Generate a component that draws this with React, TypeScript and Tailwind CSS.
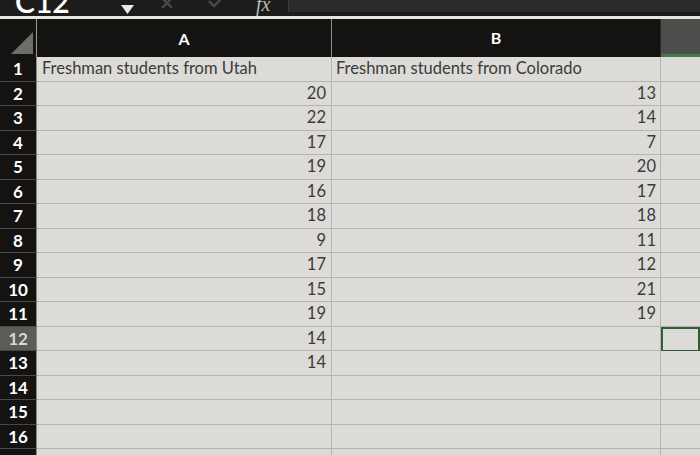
const colA = [null, 20, 22, 17, 19, 16, 18, 9, 17, 15, 19, 14, 14, null, null, null, null];
const colB = [null, 13, 14, 7, 20, 17, 18, 11, 12, 21, 19, null, null, null, null, null, null];

const App = () => {
    const rows = Array.from({ length: 17 }, (_, i) => i + 1);
    return (
        <div className="w-[700px] h-[455px] overflow-hidden bg-[#dcdbd7] text-[#3b3b3b]" style={{ fontFamily: 'Lato, "Open Sans", sans-serif' }}>
            {/* name box / formula bar */}
            <div className="flex h-[16px] bg-[#1d1c1b] overflow-hidden">
                <div className="w-[112px] pl-[15px] text-white font-semibold text-[30px] leading-none -mt-[14px]">C12</div>
                <div className="w-[30px] flex justify-center pt-[5px]">
                    <svg width="13" height="9" viewBox="0 0 13 9"><path d="M0 0 L13 0 L6.5 9 Z" fill="#e8e8e8" /></svg>
                </div>
                <div className="w-[50px] flex justify-center">
                    <svg width="12" height="9" viewBox="0 0 12 9"><path d="M1 -2 L11 8 M11 -2 L1 8" stroke="#4a4a48" strokeWidth="2.4" /></svg>
                </div>
                <div className="w-[46px] flex justify-center">
                    <svg width="14" height="9" viewBox="0 0 14 9"><path d="M1 1 L6 6 L13 -1" stroke="#4a4a48" strokeWidth="2.4" fill="none" /></svg>
                </div>
                <div className="w-[50px] pl-[18px] text-[#b9b9b6] italic text-[20px] leading-none -mt-[6px]" style={{ fontFamily: '"Liberation Serif", serif' }}>fx</div>
                <div className="flex-1 flex flex-col">
                    <div className="h-[12px] bg-[#2c2b29] border-l border-[#3e3d3b]" />
                </div>
            </div>
            <div className="h-[3px] bg-[#e6e5e2]" />
            {/* column headers */}
            <div className="flex h-[38px] bg-[#141312]">
                <div className="w-[37px] relative border-r border-[#9a9996]">
                    <svg className="absolute right-[3px] bottom-[3px]" width="22" height="22" viewBox="0 0 22 22"><path d="M22 0 L22 22 L0 22 Z" fill="#6e6d6a" /></svg>
                </div>
                <div className="w-[295px] flex items-center justify-center pt-[2px] text-white font-bold text-[16px] border-r border-[#8e8d8a]">A</div>
                <div className="w-[329px] flex items-center justify-center text-white font-bold text-[16px] border-r border-[#2a2a28]">B</div>
                <div className="flex-1 bg-[#4c4e4b] border-b-[3px] border-[#3f7a4a]" />
            </div>
            {/* rows */}
            {rows.map((r, i) => (
                <div key={r} className="flex h-[24.5px]">
                    <div className={`w-[37px] flex items-center justify-center font-bold text-[17px] border-r border-[#8a8986] border-b ${r === 12 ? 'bg-[#5b5b58] text-[#d8d8d6] border-b-[#454442]' : 'bg-[#141312] text-white border-b-[#4a4947]'}`}>{r < 17 ? r : ''}</div>
                    <div className="w-[295px] flex items-center border-r border-b border-[#b5b4b0] px-[5px] text-[16.5px]">
                        {r === 1 ? <span>Freshman students from Utah</span> : <span className="ml-auto">{colA[i]}</span>}
                    </div>
                    <div className="w-[329px] flex items-center border-r border-b border-[#b5b4b0] px-[4px] text-[16.5px]">
                        {r === 1 ? <span>Freshman students from Colorado</span> : <span className="ml-auto">{colB[i]}</span>}
                    </div>
                    <div className={`flex-1 border-b ${r === 12 ? 'border-2 border-[#2f5f37]' : 'border-[#b5b4b0]'}`} />
                </div>
            ))}
        </div>
    );
}

export default App;
